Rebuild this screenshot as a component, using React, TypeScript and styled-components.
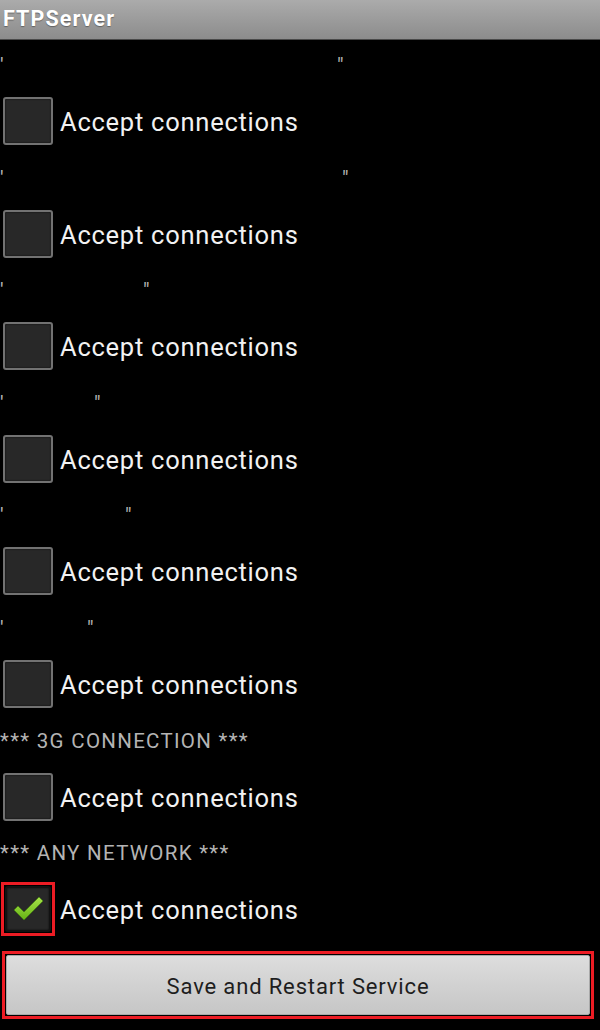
import React from "react";
import styled, { createGlobalStyle } from "styled-components";

const Global = createGlobalStyle`
  html, body { margin: 0; padding: 0; background: #000; }
  body { font-family: Roboto, "Noto Sans", "Liberation Sans", sans-serif; }
`;

const Screen = styled.div`
  width: 600px;
  height: 1030px;
  background: #000;
  display: flex;
  flex-direction: column;
  overflow: hidden;
`;

const TitleBar = styled.div`
  height: 39px;
  flex: 0 0 39px;
  background: linear-gradient(#ababab, #8c8c8c);
  border-bottom: 1px solid #4a4a4a;
  display: flex;
  align-items: center;
  padding-left: 3px;
  box-sizing: content-box;
`;

const Title = styled.div`
  color: #fff;
  font-weight: bold;
  font-size: 21.5px;
  letter-spacing: 1.1px;
  text-shadow: 0 1px 1px rgba(0, 0, 0, 0.35);
  margin-top: -3px;
`;

const Block = styled.div`
  height: 112.6px;
  display: flex;
  flex-direction: column;
`;

const Label = styled.div`
  height: 49.6px;
  box-sizing: border-box;
  padding-top: 13px;
  color: #b4b4b4;
  font-size: 20.5px;
  letter-spacing: 1.3px;
  line-height: 24px;
  white-space: pre;
`;

const Gap = styled.span<{ $w: number }>`
  display: inline-block;
  width: ${(p) => p.$w}px;
`;

const Row = styled.div`
  height: 63px;
  display: flex;
  align-items: center;
`;

const Frame = styled.div<{ $hl?: boolean }>`
  width: 54px;
  height: 54px;
  box-sizing: border-box;
  margin-left: 1px;
  display: flex;
  align-items: center;
  justify-content: center;
  border: 3px solid ${(p) => (p.$hl ? "#ec1c24" : "transparent")};
`;

const Box = styled.div<{ $checked?: boolean }>`
  flex: 0 0 auto;
  width: ${(p) => (p.$checked ? 46 : 50)}px;
  height: ${(p) => (p.$checked ? 46 : 48)}px;
  box-sizing: border-box;
  border-radius: 3px;
  border: 2px solid ${(p) => (p.$checked ? "#121212" : "#727272")};
  background: #282828;
  box-shadow: inset 0 0 2px rgba(0, 0, 0, 0.8);
  display: flex;
  align-items: center;
  justify-content: center;
`;

const RowText = styled.div`
  color: #f2f2f2;
  font-size: 25.5px;
  letter-spacing: 0.75px;
  margin-left: 5px;
  margin-top: 2px;
`;

const ButtonFrame = styled.div`
  margin: 10px 6px 0 2px;
  border: 3px solid #ec1c24;
  height: 68px;
  box-sizing: border-box;
  display: flex;
`;

const Button = styled.button`
  flex: 1;
  margin: 1px;
  border: 1px solid #a9a9a9;
  border-radius: 2px;
  background: linear-gradient(#dddddd, #c6c6c6);
  color: #1e1e1e;
  font-family: Roboto, "Noto Sans", "Liberation Sans", sans-serif;
  font-size: 22px;
  letter-spacing: 0.85px;
  padding: 4px 0 0;
`;

const Check = () => (
  <svg width="32" height="28" viewBox="0 0 32 28">
    <defs>
      <linearGradient id="g" x1="0" y1="0" x2="0" y2="1">
        <stop offset="0" stopColor="#a6e34a" />
        <stop offset="1" stopColor="#66b214" />
      </linearGradient>
    </defs>
    <path
      d="M2 15 L6 11 L12 17 L27 2 L31 6 L12 25 Z"
      fill="url(#g)"
      stroke="#3e7a0a"
      strokeWidth="0.6"
      strokeLinejoin="round"
    />
  </svg>
);

type Item = { gap?: number; text?: string; checked?: boolean };

const items: Item[] = [
  { gap: 332 },
  { gap: 337 },
  { gap: 138 },
  { gap: 89 },
  { gap: 120 },
  { gap: 82 },
  { text: "*** 3G CONNECTION ***" },
  { text: "*** ANY NETWORK ***", checked: true },
];

export default function App() {
  return (
    <Screen>
      <Global />
      <TitleBar>
        <Title>FTPServer</Title>
      </TitleBar>
      {items.map((it, i) => (
        <Block key={i}>
          <Label>
            {it.text ? (
              it.text
            ) : (
              <>
                '<Gap $w={it.gap ?? 0} />"
              </>
            )}
          </Label>
          <Row>
            <Frame $hl={it.checked}>
              <Box $checked={it.checked}>{it.checked && <Check />}</Box>
            </Frame>
            <RowText>Accept connections</RowText>
          </Row>
        </Block>
      ))}
      <ButtonFrame>
        <Button>Save and Restart Service</Button>
      </ButtonFrame>
    </Screen>
  );
}
